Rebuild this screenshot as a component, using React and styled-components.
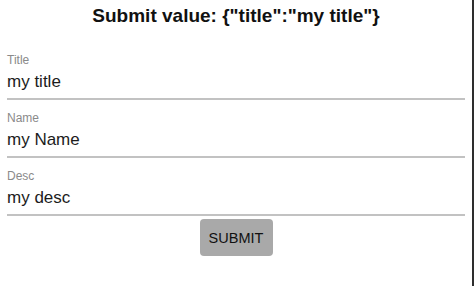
import styled, { createGlobalStyle } from 'styled-components';

const GlobalStyle = createGlobalStyle`
    html, body {
        margin: 0;
        padding: 0;
        background: #fff;
    }
    body {
        font-family: "Liberation Sans", Arial, sans-serif;
    }
`;

const fields = [
    { name: 'title', label: 'Title', value: 'my title' },
    { name: 'name', label: 'Name', value: 'my Name' },
    { name: 'desc', label: 'Desc', value: 'my desc' },
];

const App = () => {
    return (
        <>
            <GlobalStyle />
            <Page>
                <Heading>Submit value: {'{"title":"my title"}'}</Heading>
                <Form onSubmit={(e) => e.preventDefault()}>
                    {fields.map((f) => (
                        <Field key={f.name}>
                            <Label htmlFor={f.name}>{f.label}</Label>
                            <Input id={f.name} defaultValue={f.value} />
                        </Field>
                    ))}
                    <SubmitButton type="submit">SUBMIT</SubmitButton>
                </Form>
            </Page>
        </>
    );
};

export default App;

const Page = styled.div`
    box-sizing: border-box;
    height: 100vh;
    padding: 5px 7px 0 7px;
    border-right: 2px solid #2e2e2e;
`;

const Heading = styled.h1`
    margin: 0;
    font-size: 19px;
    line-height: 22px;
    font-weight: 700;
    color: #111;
    text-align: center;
`;

const Form = styled.form`
    display: flex;
    flex-direction: column;
    margin-top: 27px;
`;

const Field = styled.div`
    display: flex;
    flex-direction: column;
    margin-bottom: 12px;

    &:last-of-type {
        margin-bottom: 3px;
    }
`;

const Label = styled.label`
    font-size: 12px;
    line-height: 12px;
    color: #8a8a8a;
`;

const Input = styled.input`
    box-sizing: border-box;
    height: 34px;
    padding: 0;
    border: none;
    border-bottom: 2px solid #c2c2c2;
    outline: none;
    background: transparent;
    font-family: "Liberation Sans", Arial, sans-serif;
    font-size: 17px;
    color: #1c1c1c;
`;

const SubmitButton = styled.button`
    align-self: center;
    width: 73px;
    height: 37px;
    padding: 0;
    border: none;
    border-radius: 4px;
    background: #a9a9a9;
    font-family: "Liberation Sans", Arial, sans-serif;
    font-size: 14.5px;
    color: #111;
`;
